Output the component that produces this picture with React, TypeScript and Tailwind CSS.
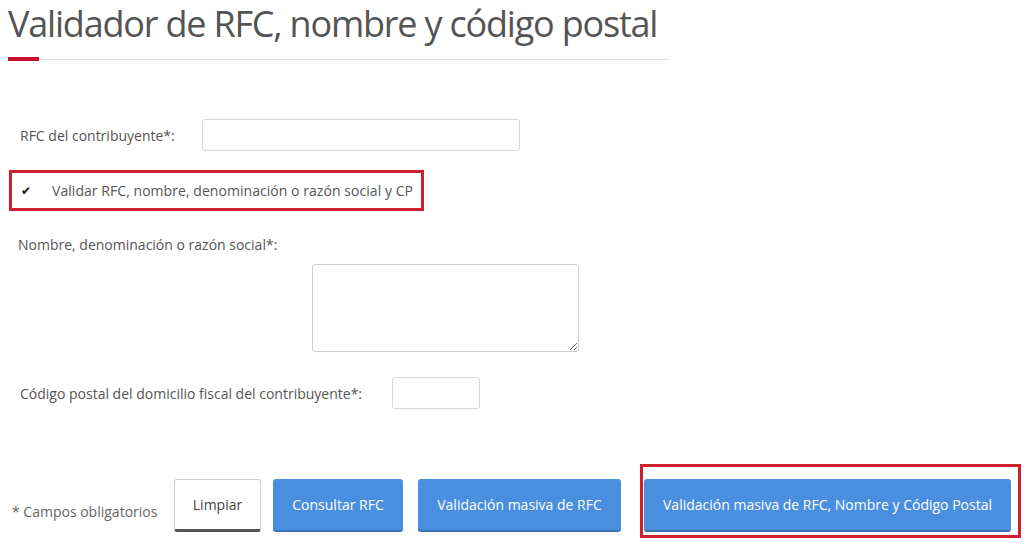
import React from "react";

export default function App() {
  return (
    <div
      className="w-[1035px] h-[544px] bg-white overflow-hidden text-[#555555]"
      style={{ fontFamily: '"Open Sans", "Liberation Sans", sans-serif' }}
    >
      <h1 className="pl-[8px] pt-[2px] text-[36px] leading-[44px] text-[#545454] tracking-[-1.2px] font-normal">
        Validador de RFC, nombre y código postal
      </h1>
      <div className="flex items-center mt-[11px] ml-[8px] w-[661px]">
        <div className="w-[31px] h-[4px] bg-[#c8102e]" />
        <div className="flex-1 h-px bg-[#dddddd]" />
      </div>

      <div className="flex items-center mt-[58px] pl-[20px]">
        <span className="text-[14px] w-[182px]">RFC del contribuyente*:</span>
        <input className="w-[318px] h-[32px] border border-[#d8d8d8] rounded-[3px] outline-none" />
      </div>

      <div className="mt-[19px] ml-[9px] w-[415px] h-[41px] border-[3px] border-[#d0202e] flex items-center">
        <span className="ml-[9px] w-[31px] text-[12px] text-[#111]">✔</span>
        <span className="text-[14px] tracking-[0.05px]">Validar RFC, nombre, denominación o razón social y CP</span>
      </div>

      <div className="mt-[24px] pl-[18px] text-[14px] leading-[20px]">
        Nombre, denominación o razón social*:
      </div>

      <div className="mt-[9px] pl-[312px]">
        <textarea className="block w-[267px] h-[88px] border border-[#cfcfcf] rounded-[3px] outline-none" />
      </div>

      <div className="flex items-center mt-[25px] pl-[20px]">
        <span className="text-[14px] w-[372px]">Código postal del domicilio fiscal del contribuyente*:</span>
        <input className="w-[88px] h-[32px] border border-[#d8d8d8] rounded-[3px] outline-none" />
      </div>

      <div className="flex items-end mt-[55px] pl-[12px]">
        <span className="text-[14px] text-[#666] w-[162px] mb-[16px]">* Campos obligatorios</span>
        <button className="w-[87px] h-[53px] bg-white border border-[#cfcfcf] border-b-[3px] border-b-[#555] rounded-[3px] text-[14px] text-[#444] mb-[6px]">
          Limpiar
        </button>
        <button className="ml-[12px] w-[130px] h-[53px] bg-[#4a8fdf] border-b-[2px] border-b-[#3b72b3] rounded-[3px] text-[14px] text-white mb-[6px]">
          Consultar RFC
        </button>
        <button className="ml-[15px] w-[203px] h-[53px] bg-[#4a8fdf] border-b-[2px] border-b-[#3b72b3] rounded-[3px] text-[14px] text-white mb-[6px]">
          Validación masiva de RFC
        </button>
        <div className="ml-[19px] w-[381px] h-[74px] border-[3px] border-[#d0202e] pt-[12px] pl-[1px]">
          <button className="w-[367px] h-[53px] bg-[#4a8fdf] border-b-[2px] border-b-[#3b72b3] rounded-[3px] text-[14px] text-white">
            Validación masiva de RFC, Nombre y Código Postal
          </button>
        </div>
      </div>
    </div>
  );
}
